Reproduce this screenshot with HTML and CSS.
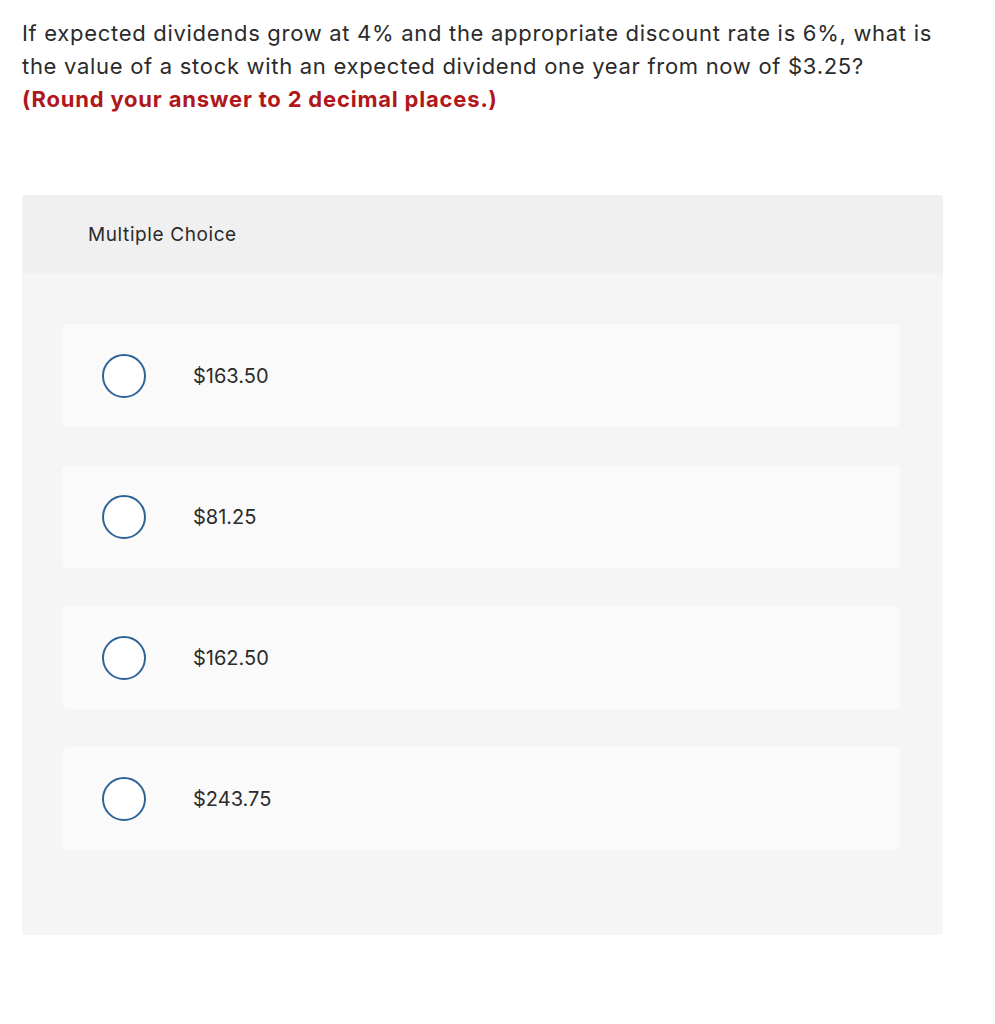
FILE: index.html
```html
<!DOCTYPE html>
<html>
<head>
<meta charset="utf-8">
<link rel="stylesheet" href="styles.css">
</head>
<body>
<div class="page">
  <div class="question">
    <p class="prompt">If expected dividends grow at 4% and the appropriate discount rate is 6%, what is<br>the value of a stock with an expected dividend one year from now of $3.25? <strong class="note">(Round your answer to 2 decimal places.)</strong></p>
  </div>
  <div class="panel">
    <div class="panel-head">Multiple Choice</div>
    <div class="panel-body">
      <div class="option"><span class="radio"></span><span class="label">$163.50</span></div>
      <div class="option"><span class="radio"></span><span class="label">$81.25</span></div>
      <div class="option"><span class="radio"></span><span class="label">$162.50</span></div>
      <div class="option"><span class="radio"></span><span class="label">$243.75</span></div>
    </div>
  </div>
</div>
</body>
</html>
```

FILE: styles.css
```css
html, body {
  margin: 0;
  padding: 0;
  background: #ffffff;
}
body {
  font-family: Inter, Lato, sans-serif;
  color: #2b2b2b;
}
.page {
  padding: 17px 0 0 22px;
  width: 921px;
}
.prompt {
  margin: 0;
  font-size: 22px;
  line-height: 33px;
  letter-spacing: 0.7px;
  width: 970px;
}
.note {
  display: block;
  color: #b0171b;
  font-weight: 700;
  letter-spacing: 0.8px;
}
.panel {
  margin-top: 79px;
  background: #f5f5f5;
  border-radius: 4px;
  overflow: hidden;
}
.panel-head {
  background: #f0f0f0;
  height: 78px;
  display: flex;
  align-items: center;
  padding-left: 66px;
  font-size: 19px;
  letter-spacing: 0.6px;
  color: #2b2b2b;
}
.panel-body {
  padding: 51px 43px 85px 40px;
  display: flex;
  flex-direction: column;
  gap: 38px;
}
.option {
  background: #fafafa;
  border-radius: 5px;
  height: 103px;
  display: flex;
  align-items: center;
  padding-left: 40px;
}
.radio {
  width: 40px;
  height: 40px;
  border: 2px solid #2d6398;
  border-radius: 50%;
  background: #ffffff;
  flex: none;
}
.label {
  margin-left: 47px;
  font-size: 20px;
  color: #2b2b2b;
}
```
